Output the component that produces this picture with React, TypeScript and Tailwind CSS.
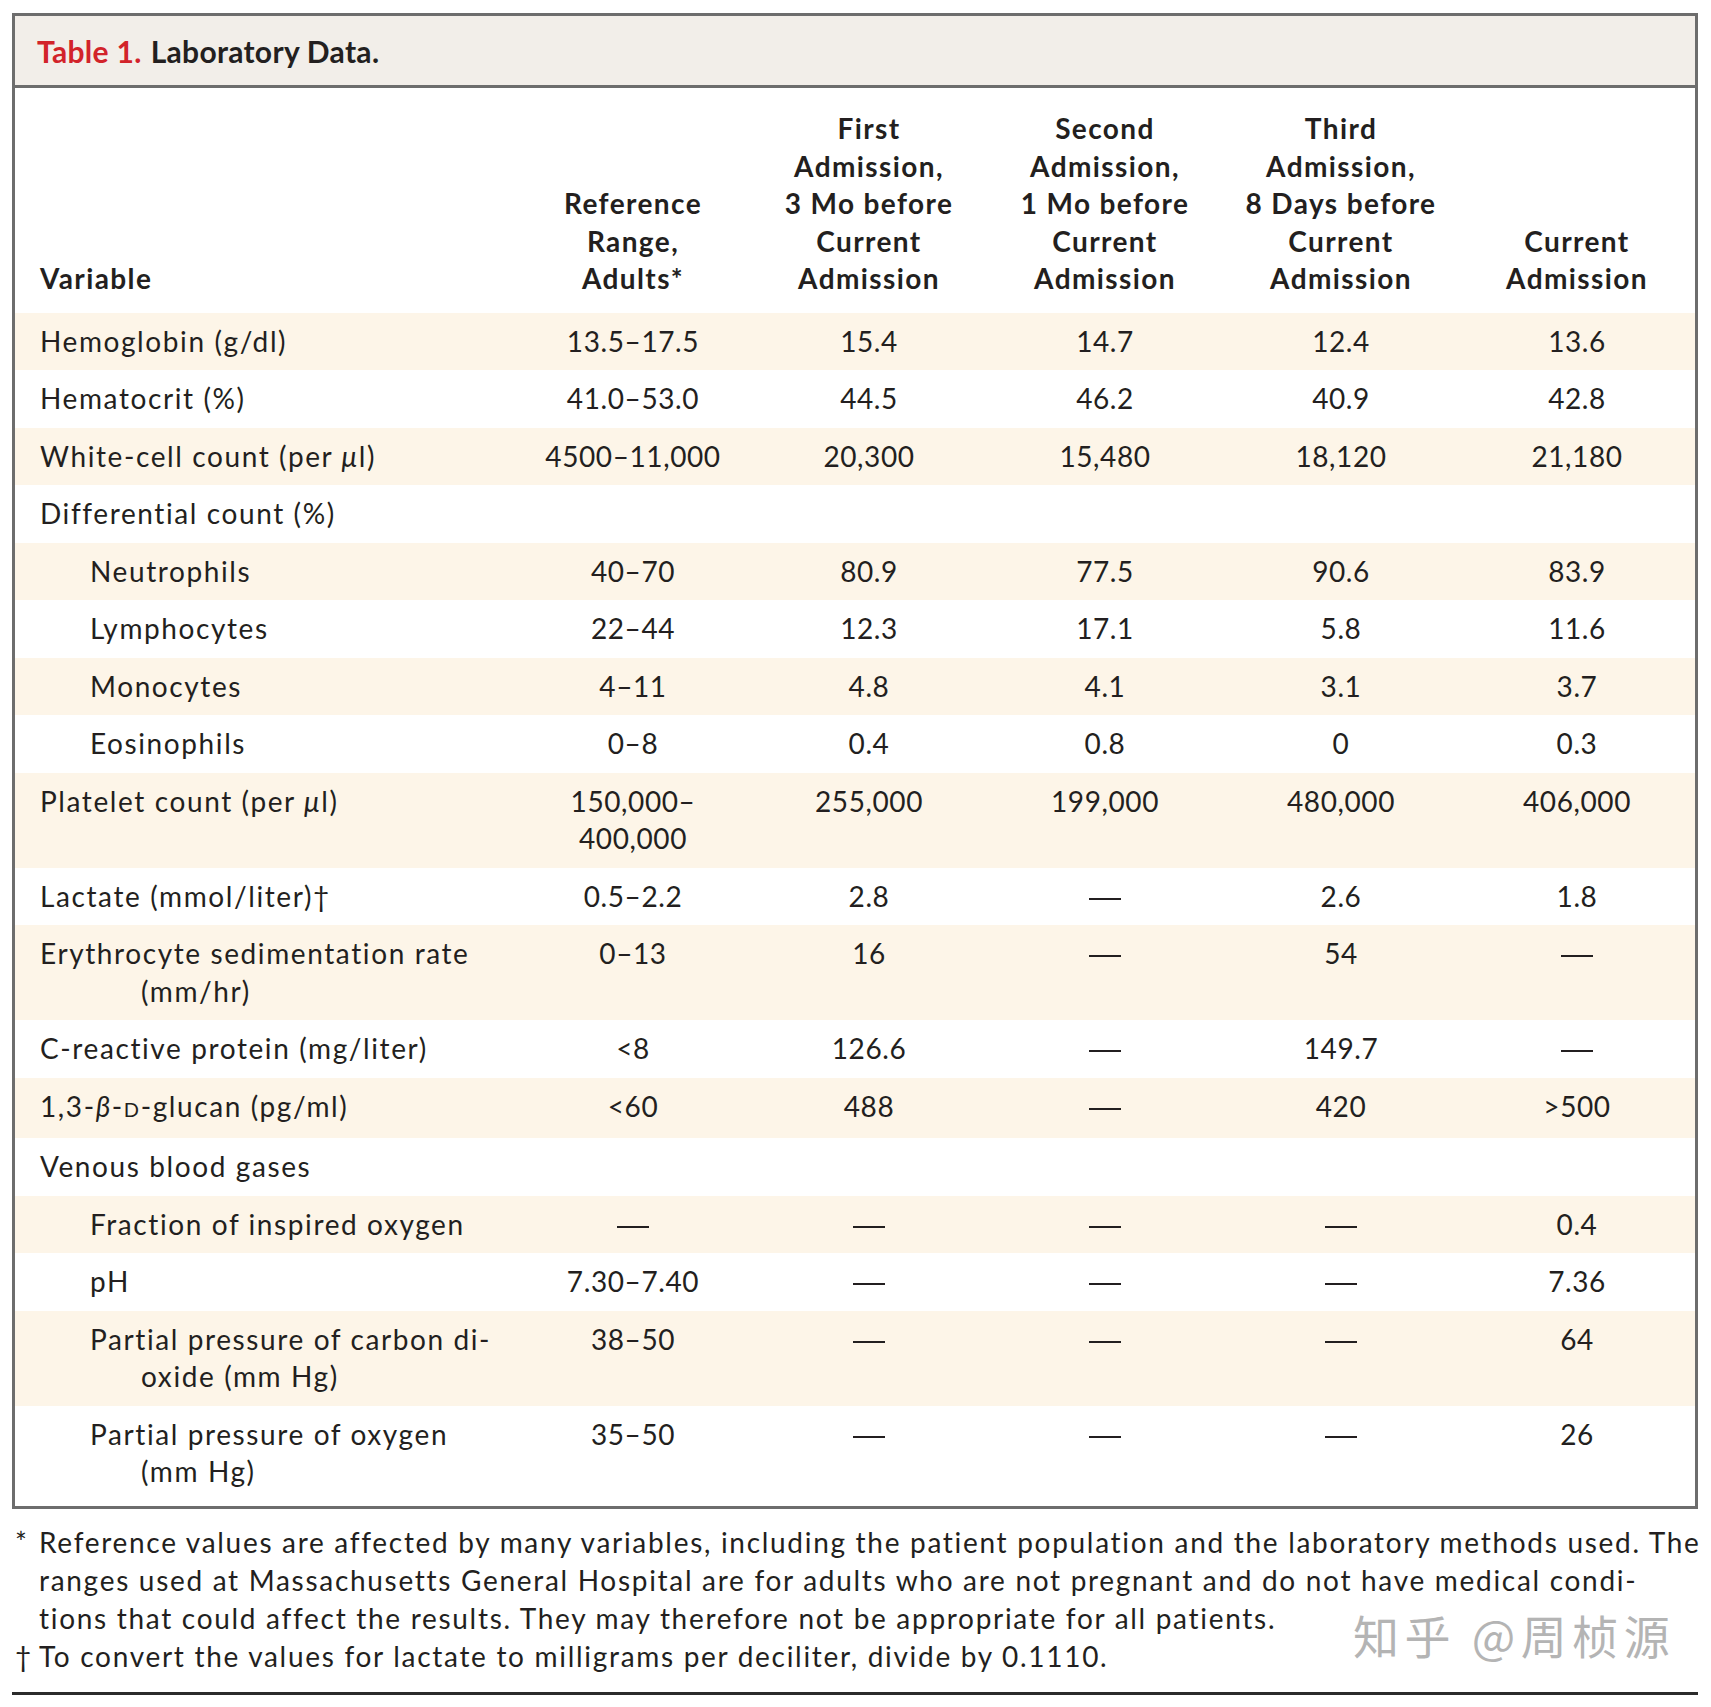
import type { ReactNode } from 'react';

type Row = {
  label: ReactNode[];
  indent?: boolean;
  values?: ReactNode[][];
};

const mu = <i className="italic">μ</i>;
// long dash used for missing values
const dash = <span aria-label="—" className="inline-block w-[32px] h-[2px] bg-[#231f20] align-[7px]" />;

const rows: Row[] = [
  { label: ['Hemoglobin (g/dl)'], values: [['13.5–17.5'], ['15.4'], ['14.7'], ['12.4'], ['13.6']] },
  { label: ['Hematocrit (%)'], values: [['41.0–53.0'], ['44.5'], ['46.2'], ['40.9'], ['42.8']] },
  { label: [<>White-cell count (per {mu}l)</>], values: [['4500–11,000'], ['20,300'], ['15,480'], ['18,120'], ['21,180']] },
  { label: ['Differential count (%)'] },
  { label: ['Neutrophils'], indent: true, values: [['40–70'], ['80.9'], ['77.5'], ['90.6'], ['83.9']] },
  { label: ['Lymphocytes'], indent: true, values: [['22–44'], ['12.3'], ['17.1'], ['5.8'], ['11.6']] },
  { label: ['Monocytes'], indent: true, values: [['4–11'], ['4.8'], ['4.1'], ['3.1'], ['3.7']] },
  { label: ['Eosinophils'], indent: true, values: [['0–8'], ['0.4'], ['0.8'], ['0'], ['0.3']] },
  { label: [<>Platelet count (per {mu}l)</>], values: [['150,000–', '400,000'], ['255,000'], ['199,000'], ['480,000'], ['406,000']] },
  { label: ['Lactate (mmol/liter)†'], values: [['0.5–2.2'], ['2.8'], [dash], ['2.6'], ['1.8']] },
  { label: ['Erythrocyte sedimentation rate', '(mm/hr)'], values: [['0–13'], ['16'], [dash], ['54'], [dash]] },
  { label: ['C-reactive protein (mg/liter)'], values: [['<8'], ['126.6'], [dash], ['149.7'], [dash]] },
  {
    label: [<>1,3-<i className="italic">β</i>-<span className="text-[20px]">D</span>-glucan (pg/ml)</>],
    values: [['<60'], ['488'], [dash], ['420'], ['>500']],
  },
  { label: ['Venous blood gases'] },
  { label: ['Fraction of inspired oxygen'], indent: true, values: [[dash], [dash], [dash], [dash], ['0.4']] },
  { label: ['pH'], indent: true, values: [['7.30–7.40'], [dash], [dash], [dash], ['7.36']] },
  { label: ['Partial pressure of carbon di-', 'oxide (mm Hg)'], indent: true, values: [['38–50'], [dash], [dash], [dash], ['64']] },
  { label: ['Partial pressure of oxygen', '(mm Hg)'], indent: true, values: [['35–50'], [dash], [dash], [dash], ['26']] },
];

const headers: string[][] = [
  ['Reference', 'Range,', 'Adults*'],
  ['First', 'Admission,', '3 Mo before', 'Current', 'Admission'],
  ['Second', 'Admission,', '1 Mo before', 'Current', 'Admission'],
  ['Third', 'Admission,', '8 Days before', 'Current', 'Admission'],
  ['Current', 'Admission'],
];

function Lines({ lines }: { lines: ReactNode[] }) {
  return (
    <>
      {lines.map((l, i) => (
        <div key={i} className="whitespace-nowrap">
          {l}
        </div>
      ))}
    </>
  );
}

export default function App() {
  return (
    <div className="relative w-[1711px] min-h-[1707px] bg-white text-[#231f20] font-['Lato',sans-serif] pt-[13px] pl-[12px]">
      <div className="w-[1686px] border-[3px] border-[#6d6d6d]">
        <div className="h-[72px] flex items-center pl-[22px] pt-[2px] bg-[#f2eee9] border-b-[3px] border-[#6d6d6d] text-[30px] font-bold tracking-[0.3px]">
          <span className="text-[#d2232a]">Table 1.</span>
          <span className="ml-[9px]">Laboratory Data.</span>
        </div>

        <div className="grid grid-cols-[500px_repeat(5,236px)] items-end pt-[22px] pb-[15px] text-[28px] leading-[37.5px] font-bold tracking-[1.4px]">
          <div className="pl-[25px]">Variable</div>
          {headers.map((h, i) => (
            <div key={i} className="text-center">
              <Lines lines={h} />
            </div>
          ))}
        </div>

        <div className="pb-[5px] text-[28px] leading-[37.5px]">
          {rows.map((r, i) => (
            <div
              key={i}
              className={`grid grid-cols-[500px_repeat(5,236px)] py-[10px] ${i % 2 === 0 ? 'bg-[#fdf5e8]' : 'bg-white'}`}
            >
              <div className={`tracking-[1.6px] ${r.indent ? 'pl-[75px]' : 'pl-[25px]'}`}>
                {r.label.map((l, j) => (
                  <div key={j} className={`whitespace-nowrap ${j > 0 ? (r.indent ? 'pl-[51px]' : 'pl-[101px]') : ''}`}>
                    {l}
                  </div>
                ))}
              </div>
              {(r.values ?? [[], [], [], [], []]).map((v, j) => (
                <div key={j} className="text-center tracking-[0.6px]">
                  <Lines lines={v} />
                </div>
              ))}
            </div>
          ))}
        </div>
      </div>

      <div className="mt-[14px] w-[1686px] text-[28px] leading-[38px] tracking-[1.7px]">
        <div className="grid grid-cols-[27px_1fr]">
          <div className="pl-[3px]">*</div>
          <div>
            <div className="whitespace-nowrap">
              Reference values are affected by many variables, including the patient population and the laboratory methods used. The
            </div>
            <div className="whitespace-nowrap">
              ranges used at Massachusetts General Hospital are for adults who are not pregnant and do not have medical condi-
            </div>
            <div className="whitespace-nowrap">
              tions that could affect the results. They may therefore not be appropriate for all patients.
            </div>
          </div>
          <div className="pl-[3px]">†</div>
          <div className="whitespace-nowrap">To convert the values for lactate to milligrams per deciliter, divide by 0.1110.</div>
        </div>
        <div className="mt-[17px] h-[3px] bg-[#2b2b2b]" />
      </div>

      <div className="absolute left-[1353px] top-[1604px] text-[46px] leading-[60px] tracking-[5.5px] text-[#b4b4b4] font-['Noto_Sans_CJK_SC',sans-serif] select-none">
        知乎 @周桢源
      </div>
    </div>
  );
}
